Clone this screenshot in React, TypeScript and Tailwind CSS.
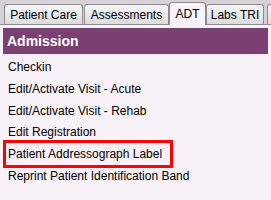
const tabs = [
  { label: 'Patient Care', w: 'w-[79px]', active: false },
  { label: 'Assessments', w: 'w-[85px]', active: false },
  { label: 'ADT', w: 'w-[37px]', active: true },
  { label: 'Labs TRI', w: 'w-[58px]', active: false },
];

const items = [
  'Checkin',
  'Edit/Activate Visit - Acute',
  'Edit/Activate Visit - Rehab',
  'Edit Registration',
  'Patient Addressograph Label',
  'Reprint Patient Identification Band',
];

export default function App() {
  return (
    <div className="w-[271px] h-[200px] overflow-hidden bg-[#f8f1f7] font-['Liberation_Sans',Arial,sans-serif] text-black">
      <div className="relative h-[25px] bg-[#d5d1d5] flex items-end pl-[4px] gap-[1px] overflow-hidden">
        <div className="absolute left-0 right-0 bottom-0 h-[1px] bg-[#8e8a8e]" />
        {tabs.map((t) =>
          t.active ? (
            <div
              key={t.label}
              className={`relative z-10 shrink-0 ${t.w} h-[23px] -mx-[1px] bg-[#f8f1f7] border border-b-0 border-[#8e8a8e] rounded-t-[3px] flex items-center justify-center text-[12px] pb-[1px]`}
            >
              {t.label}
            </div>
          ) : (
            <div
              key={t.label}
              className={`relative shrink-0 ${t.w} h-[20px] mb-[1px] bg-gradient-to-b from-[#f6f6f6] to-[#dcdcdc] border border-b-0 border-[#8e8a8e] rounded-t-[3px] flex items-center justify-center text-[12px] pt-[1px]`}
            >
              {t.label}
            </div>
          ),
        )}
        <div className="relative shrink-0 w-[20px] h-[20px] mb-[1px] ml-[2px] bg-gradient-to-b from-[#f6f6f6] to-[#dcdcdc] border border-b-0 border-[#8e8a8e] rounded-t-[3px]" />
      </div>

      <div className="pt-[3px] px-[3px]">
        <div className="h-[26px] bg-[#7c3f72] flex items-center pl-[4px]">
          <span className="text-white font-bold text-[14px]">Admission</span>
        </div>
        <div className="pt-[3px]">
          {items.map((item, i) => (
            <div key={item} className="relative h-[21.8px] leading-[21.8px] pl-[5px] text-[12px]">
              {item}
              {i === 4 && (
                <div className="absolute -top-[4px] -bottom-[2px] left-0 w-[170px] border-[3px] border-[#ff0000]" />
              )}
            </div>
          ))}
        </div>
      </div>
    </div>
  );
}
